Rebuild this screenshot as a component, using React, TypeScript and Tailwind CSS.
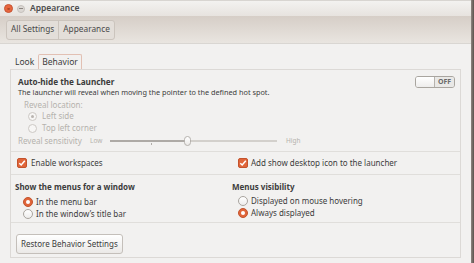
import React from 'react';

const Check = () => (
  <span className="w-[10px] h-[10px] rounded-[2px] bg-[#e0653a] border border-[#c4532c] flex items-center justify-center shrink-0">
    <svg width="8" height="8" viewBox="0 0 8 8">
      <path d="M1.3 4.2 L3.2 6 L6.8 1.8" fill="none" stroke="#fff" strokeWidth="1.5" />
    </svg>
  </span>
);

const Radio = ({ on, disabled }: { on?: boolean; disabled?: boolean }) => {
  if (disabled) {
    return (
      <span className="w-[9px] h-[9px] rounded-full border border-[#cdc9c5] bg-[#f7f6f5] flex items-center justify-center shrink-0">
        {on && <span className="w-[3px] h-[3px] rounded-full bg-[#b9b4b0]" />}
      </span>
    );
  }
  return on ? (
    <span className="w-[10px] h-[10px] rounded-full bg-[#e0653a] border border-[#c4532c] flex items-center justify-center shrink-0">
      <span className="w-[4px] h-[4px] rounded-full bg-white" />
    </span>
  ) : (
    <span className="w-[10px] h-[10px] rounded-full border border-[#a9a49f] bg-gradient-to-b from-white to-[#eeedec] shrink-0" />
  );
};

export default function App() {
  return (
    <div className="w-[474px] h-[263px] flex overflow-hidden bg-[#f2f1f0] text-[#3c3c3c] font-['Noto_Sans',sans-serif]">
      <div className="flex-1 flex flex-col min-w-0">
        {/* title bar */}
        <div className="h-[16px] flex items-center gap-[4px] pl-[4px] border-t border-[#d8d5d1] bg-gradient-to-b from-[#f3f2f0] to-[#e7e3df]">
          <span className="w-[9px] h-[9px] rounded-full bg-[#e8663d] border border-[#c65535] flex items-center justify-center">
            <span className="text-[6px] leading-none text-[#8a2d12]">×</span>
          </span>
          <span className="w-[8px] h-[8px] rounded-full bg-[#dcd8d4] border border-[#c6c1bc] flex items-center justify-center">
            <span className="w-[4px] h-px bg-[#8b8580]" />
          </span>
          <span className="ml-[1px] text-[8.5px] leading-none font-semibold text-[#4c4c4c]">Appearance</span>
        </div>
        {/* toolbar */}
        <div className="h-[28px] flex items-center pl-[6px] bg-gradient-to-b from-[#d6cec7] to-[#e9e5e0] border-b border-[#d9d6d2]">
          <div className="flex h-[20px] rounded-[3px] border border-[#cbc4bd] bg-[#e3ded9]">
            <span className="px-[4px] flex items-center text-[8.3px] text-[#4a4a4a] border-r border-[#cbc4bd]">All Settings</span>
            <span className="px-[4px] flex items-center text-[8.3px] text-[#4a4a4a]">Appearance</span>
          </div>
        </div>
        {/* content */}
        <div className="flex-1 flex flex-col pl-[10px] pr-[10px] pt-[10px] pb-[5px]">
          <div className="flex items-end h-[15px] pl-[5px] gap-[4px]">
            <span className="text-[8.5px] leading-none pb-[3px] text-[#3c3c3c]">Look</span>
            <span className="h-[15px] px-[3px] flex items-center text-[8.5px] leading-none border border-b-0 border-[#e2c0b3] rounded-t-[2px] text-[#3c3c3c] bg-[#f2f1f0]">Behavior</span>
          </div>
          <div className="flex-1 flex flex-col border border-[#dcd9d6] bg-[#f2f1f0]">
            {/* launcher section */}
            <div className="h-[82px] flex flex-col pl-[7px] pr-[5px] pt-[6px] border-b border-[#e0dedb]">
              <div className="flex items-start justify-between">
                <div className="flex flex-col">
                  <span className="text-[8.2px] leading-[11px] font-bold text-[#3c3c3c]">Auto-hide the Launcher</span>
                  <span className="text-[7.3px] leading-[11px] text-[#3c3c3c]">The launcher will reveal when moving the pointer to the defined hot spot.</span>
                </div>
                <div className="w-[40px] h-[12px] flex rounded-[3px] border border-[#a9a59f] overflow-hidden">
                  <span className="w-[19px] bg-gradient-to-b from-white to-[#eeedec] border-r border-[#b6b2ad]" />
                  <span className="flex-1 flex items-center justify-center text-[7px] font-bold text-[#6a6a6a] bg-[#e9e8e6]">OFF</span>
                </div>
              </div>
              <div className="pl-[6px] pt-[1px] flex flex-col text-[#b5b1ad]">
                <span className="text-[8px] leading-[11px]">Reveal location:</span>
                <div className="flex items-center gap-[5px] pl-[4px] h-[12px]">
                  <Radio on disabled />
                  <span className="text-[8px]">Left side</span>
                </div>
                <div className="flex items-center gap-[5px] pl-[4px] h-[12px]">
                  <Radio disabled />
                  <span className="text-[8px]">Top left corner</span>
                </div>
              </div>
              <div className="flex items-center h-[14px] text-[#b5b1ad]">
                <span className="text-[8px] w-[72px]">Reveal sensitivity</span>
                <span className="text-[6.5px] w-[20px]">Low</span>
                <div className="relative w-[167px] h-[10px] flex items-center">
                  <div className="w-[78px] h-[2px] bg-[#aeaaa6]" />
                  <div className="flex-1 h-[2px] bg-[#d3d0cc]" />
                  <span className="absolute left-[41px] top-[7px] w-px h-[2px] bg-[#b0aca8]" />
                  <span className="absolute left-[74px] top-0 w-[7px] h-[10px] rounded-full border border-[#b5b1ad] bg-gradient-to-b from-white to-[#ebe9e7]" />
                </div>
                <span className="text-[6.5px] pl-[9px]">High</span>
              </div>
            </div>
            {/* checkbox row */}
            <div className="h-[23px] grid grid-cols-[221px_1fr] items-center border-b border-[#e0dedb]">
              <div className="flex items-center gap-[4px] pl-[6px]">
                <Check />
                <span className="text-[8px]">Enable workspaces</span>
              </div>
              <div className="flex items-center gap-[3px] pl-[6px]">
                <Check />
                <span className="text-[8px]">Add show desktop icon to the launcher</span>
              </div>
            </div>
            {/* menus section */}
            <div className="h-[48px] grid grid-cols-[221px_1fr] pt-[6px] border-b border-[#e0dedb]">
              <div className="flex flex-col pl-[4px]">
                <span className="text-[8px] leading-[11px] font-bold">Show the menus for a window</span>
                <div className="flex items-center gap-[3px] pl-[8px] h-[12px] mt-[4px]">
                  <Radio on />
                  <span className="text-[8px]">In the menu bar</span>
                </div>
                <div className="flex items-center gap-[3px] pl-[8px] h-[12px]">
                  <Radio />
                  <span className="text-[8px]">In the window’s title bar</span>
                </div>
              </div>
              <div className="flex flex-col">
                <span className="text-[8px] leading-[11px] font-bold">Menus visibility</span>
                <div className="flex items-center gap-[3px] pl-[6px] h-[12px] mt-[3px]">
                  <Radio />
                  <span className="text-[8px]">Displayed on mouse hovering</span>
                </div>
                <div className="flex items-center gap-[3px] pl-[6px] h-[12px]">
                  <Radio on />
                  <span className="text-[8px]">Always displayed</span>
                </div>
              </div>
            </div>
            {/* restore */}
            <div className="pl-[5px] pt-[6px]">
              <span className="inline-flex items-center h-[20px] px-[4px] rounded-[3px] border border-[#c4bfba] bg-gradient-to-b from-white to-[#ebe9e7] text-[8px] text-[#3c3c3c]">Restore Behavior Settings</span>
            </div>
          </div>
        </div>
      </div>
      <div className="w-[3px] bg-gradient-to-r from-[#8f8782] to-[#5b524d]" />
    </div>
  );
}
